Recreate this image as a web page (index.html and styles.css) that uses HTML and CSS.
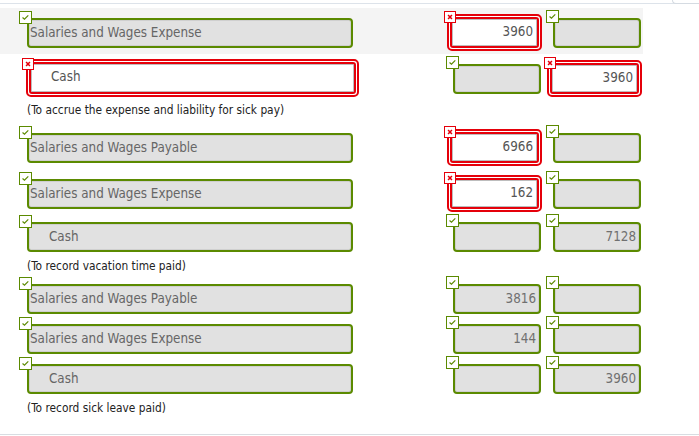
FILE: index.html
```html
<!DOCTYPE html>
<html>
<head>
<meta charset="utf-8">
<link rel="stylesheet" href="styles.css">
</head>
<body>
<div class="topbar"><div class="topknob"></div></div>
<div class="journal">
  <div class="row first">
    <div class="cell txt"><span class="badge ok"><svg viewBox="0 0 13 13"><path d="M3 6.5 L5.3 8.5 L9.8 4" /></svg></span><div class="inp ok">Salaries and Wages Expense</div></div>
    <div class="cell num"><div class="bad"><div class="inp">3960</div></div><span class="badge x rb"><svg viewBox="0 0 13 13"><path d="M4 4 L9 9 M9 4 L4 9" /></svg></span></div>
    <div class="cell num"><span class="badge ok"><svg viewBox="0 0 13 13"><path d="M3 6.5 L5.3 8.5 L9.8 4" /></svg></span><div class="inp ok"></div></div>
  </div>
  <div class="row r2">
    <div class="cell txt"><div class="bad wide"><div class="inp indent">Cash</div></div><span class="badge x rt"><svg viewBox="0 0 13 13"><path d="M4 4 L9 9 M9 4 L4 9" /></svg></span></div>
    <div class="cell num"><span class="badge ok"><svg viewBox="0 0 13 13"><path d="M3 6.5 L5.3 8.5 L9.8 4" /></svg></span><div class="inp ok"></div></div>
    <div class="cell num"><div class="bad"><div class="inp">3960</div></div><span class="badge x rb"><svg viewBox="0 0 13 13"><path d="M4 4 L9 9 M9 4 L4 9" /></svg></span></div>
  </div>
  <div class="note n1">(To accrue the expense and liability for sick pay)</div>
  <div class="row r3">
    <div class="cell txt"><span class="badge ok"><svg viewBox="0 0 13 13"><path d="M3 6.5 L5.3 8.5 L9.8 4" /></svg></span><div class="inp ok">Salaries and Wages Payable</div></div>
    <div class="cell num"><div class="bad"><div class="inp">6966</div></div><span class="badge x rb"><svg viewBox="0 0 13 13"><path d="M4 4 L9 9 M9 4 L4 9" /></svg></span></div>
    <div class="cell num"><span class="badge ok"><svg viewBox="0 0 13 13"><path d="M3 6.5 L5.3 8.5 L9.8 4" /></svg></span><div class="inp ok"></div></div>
  </div>
  <div class="row r4">
    <div class="cell txt"><span class="badge ok"><svg viewBox="0 0 13 13"><path d="M3 6.5 L5.3 8.5 L9.8 4" /></svg></span><div class="inp ok">Salaries and Wages Expense</div></div>
    <div class="cell num"><div class="bad"><div class="inp">162</div></div><span class="badge x rb"><svg viewBox="0 0 13 13"><path d="M4 4 L9 9 M9 4 L4 9" /></svg></span></div>
    <div class="cell num"><span class="badge ok"><svg viewBox="0 0 13 13"><path d="M3 6.5 L5.3 8.5 L9.8 4" /></svg></span><div class="inp ok"></div></div>
  </div>
  <div class="row r5">
    <div class="cell txt"><span class="badge ok"><svg viewBox="0 0 13 13"><path d="M3 6.5 L5.3 8.5 L9.8 4" /></svg></span><div class="inp ok indent">Cash</div></div>
    <div class="cell num"><span class="badge ok"><svg viewBox="0 0 13 13"><path d="M3 6.5 L5.3 8.5 L9.8 4" /></svg></span><div class="inp ok"></div></div>
    <div class="cell num"><span class="badge ok"><svg viewBox="0 0 13 13"><path d="M3 6.5 L5.3 8.5 L9.8 4" /></svg></span><div class="inp ok">7128</div></div>
  </div>
  <div class="note n2">(To record vacation time paid)</div>
  <div class="row r6">
    <div class="cell txt"><span class="badge ok"><svg viewBox="0 0 13 13"><path d="M3 6.5 L5.3 8.5 L9.8 4" /></svg></span><div class="inp ok">Salaries and Wages Payable</div></div>
    <div class="cell num"><span class="badge ok"><svg viewBox="0 0 13 13"><path d="M3 6.5 L5.3 8.5 L9.8 4" /></svg></span><div class="inp ok">3816</div></div>
    <div class="cell num"><span class="badge ok"><svg viewBox="0 0 13 13"><path d="M3 6.5 L5.3 8.5 L9.8 4" /></svg></span><div class="inp ok"></div></div>
  </div>
  <div class="row r7">
    <div class="cell txt"><span class="badge ok"><svg viewBox="0 0 13 13"><path d="M3 6.5 L5.3 8.5 L9.8 4" /></svg></span><div class="inp ok">Salaries and Wages Expense</div></div>
    <div class="cell num"><span class="badge ok"><svg viewBox="0 0 13 13"><path d="M3 6.5 L5.3 8.5 L9.8 4" /></svg></span><div class="inp ok">144</div></div>
    <div class="cell num"><span class="badge ok"><svg viewBox="0 0 13 13"><path d="M3 6.5 L5.3 8.5 L9.8 4" /></svg></span><div class="inp ok"></div></div>
  </div>
  <div class="row r8">
    <div class="cell txt"><span class="badge ok"><svg viewBox="0 0 13 13"><path d="M3 6.5 L5.3 8.5 L9.8 4" /></svg></span><div class="inp ok indent">Cash</div></div>
    <div class="cell num"><span class="badge ok"><svg viewBox="0 0 13 13"><path d="M3 6.5 L5.3 8.5 L9.8 4" /></svg></span><div class="inp ok"></div></div>
    <div class="cell num"><span class="badge ok"><svg viewBox="0 0 13 13"><path d="M3 6.5 L5.3 8.5 L9.8 4" /></svg></span><div class="inp ok">3960</div></div>
  </div>
  <div class="note n3">(To record sick leave paid)</div>
</div>
<div class="bottomline"></div>
</body>
</html>
```

FILE: styles.css
```css
html, body {
  margin: 0;
  padding: 0;
  background: #fff;
  width: 699px;
  height: 436px;
  overflow: hidden;
}
body {
  font-family: "DejaVu Sans Condensed", "Liberation Sans", sans-serif;
  font-size: 12px;
  color: #222;
  position: relative;
}
.topbar {
  height: 3px;
  border-bottom: 1px solid #dde3ea;
  position: relative;
}
.topknob {
  position: absolute;
  right: 0;
  top: 0;
  width: 26px;
  height: 3px;
  border: 1px solid #d5dbe2;
  border-top: none;
  border-right: none;
  border-bottom-left-radius: 4px;
}
.journal {
  display: flex;
  flex-direction: column;
  margin-top: 4px;
}
.row {
  display: grid;
  grid-template-columns: 414px 88px 88px;
  column-gap: 12px;
  height: 30px;
  padding-left: 27px;
}
.cell.txt {
  width: 326px;
}
.row.first {
  background: #f4f4f4;
  padding-top: 10px;
  padding-bottom: 6px;
  width: 616px;
}
.r2 { margin-top: 10px; }
.r3 { margin-top: 15px; }
.r4 { margin-top: 16px; }
.r5 { margin-top: 13px; }
.r6 { margin-top: 10px; }
.r7 { margin-top: 10px; }
.r8 { margin-top: 10px; }
.note {
  padding-left: 27px;
  line-height: 16px;
  height: 16px;
  font-size: 11.8px;
  color: #222;
}
.n1 { margin-top: 8px; }
.n2 { margin-top: 6px; }
.n3 { margin-top: 6px; }
.cell {
  position: relative;
  height: 30px;
}
.inp {
  box-sizing: border-box;
  height: 30px;
  line-height: 26px;
  padding: 0 3px 0 1px;
  font-size: 13.3px;
  color: #666;
  white-space: nowrap;
  overflow: hidden;
}
.inp.ok {
  border: 2px solid #5b8a00;
  border-radius: 4px;
  background: #e1e1e1;
  box-shadow: inset 0 0 0 1px #cfcfcf;
}
.num .inp {
  text-align: right;
  color: #707070;
}
.indent {
  padding-left: 20px;
}
.bad {
  box-sizing: border-box;
  border: 2px solid #e5000a;
  border-radius: 5px;
  padding: 1px;
  background: #fff;
  margin: -4px -1px -3px -6px;
  height: 37px;
}
.bad .inp {
  height: 100%;
  line-height: 25px;
  border: 2px solid #e5000a;
  border-radius: 3px;
  background: #fff;
  box-shadow: inset 0 0 0 1px #bdbdbd;
  color: #555;
  padding-right: 4px;
}
.bad.wide {
  margin: -5px -6px -3px -1px;
  height: 38px;
}
.bad.wide .inp {
  padding-left: 20px;
  line-height: 26px;
}
.badge {
  position: absolute;
  box-sizing: border-box;
  width: 13px;
  height: 13px;
  background: #fff;
  left: -8px;
  top: -7px;
}
.num .badge {
  left: -7px;
  top: -8px;
}
.badge svg {
  display: block;
  width: 11px;
  height: 11px;
}
.badge.ok {
  border: 1px solid #5b8a00;
}
.badge.ok svg path {
  fill: none;
  stroke: #5b8a00;
  stroke-width: 1.4;
}
.badge.x {
  border: 1px solid #e5000a;
  width: 12px;
  height: 12px;
}
.badge.x svg {
  width: 10px;
  height: 10px;
}
.badge.x svg path {
  fill: none;
  stroke: #e5000a;
  stroke-width: 2;
}
.num .badge.rb {
  left: -9px;
  top: -7px;
}
.badge.rt {
  left: -5px;
  top: -6px;
}
.bottomline {
  position: absolute;
  left: 0;
  right: 0;
  top: 434px;
  height: 1px;
  background: #d8dde2;
}
```
